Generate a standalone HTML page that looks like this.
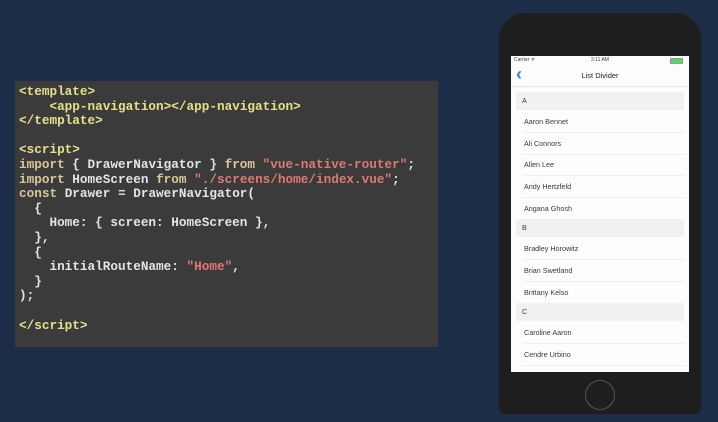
<!DOCTYPE html>
<html><head><style>
body{margin:0;width:718px;height:422px;background:#1c2d47;position:relative;overflow:hidden;font-family:"Liberation Sans",sans-serif}
#code{position:absolute;left:15px;top:81px;width:423px;height:266px;background:#3b3b3b}
pre{margin:0;position:absolute;left:19px;top:85px;font:bold 12.7px/14.6px "Liberation Mono",monospace;color:#e4e4e4}
.t{color:#e6e08a}.k{color:#d9c79a}.s{color:#dc7a72}
#phone{position:absolute;left:499px;top:13px;width:202px;height:401px;background:#1e1e1e;border-radius:26px 26px 6px 6px}
#scr{position:absolute;left:511px;top:56px;width:178px;height:316px;background:#fdfdfd;overflow:hidden;font-size:7.2px;color:#3a3a3a}
.hb{position:absolute;left:585px;top:380px;width:28px;height:28px;border:1.5px solid #555;border-radius:50%}
.sec{position:absolute;left:5px;width:168px;height:18px;background:#f1f1f1;line-height:18px;text-indent:6px}
.it{position:absolute;left:13px;width:160px;height:21px;line-height:21px;border-bottom:1px solid #eee}
</style></head><body>
<div id="code"></div>
<pre><span class="t">&lt;template&gt;
    &lt;app-navigation&gt;&lt;/app-navigation&gt;
&lt;/template&gt;

&lt;script&gt;</span>
<span class="k">import</span> { DrawerNavigator } <span class="k">from</span> <span class="s">"vue-native-router"</span>;
<span class="k">import</span> HomeScreen <span class="k">from</span> <span class="s">"./screens/home/index.vue"</span>;
<span class="k">const</span> Drawer = DrawerNavigator(
  {
    Home: { screen: HomeScreen },
  },
  {
    initialRouteName: <span class="s">"Home"</span>,
  }
);

<span class="t">&lt;/script&gt;</span></pre>
<div id="phone"></div>
<div id="scr">
<div style="position:absolute;left:3px;top:1px;font-size:5px">Carrier ᯤ</div>
<div style="position:absolute;left:80px;top:1px;font-size:5px">2:11 AM</div>
<div style="position:absolute;left:159px;top:2px;width:11px;height:4px;background:#4cd964;border:1px solid #999"></div>
<div style="position:absolute;left:5px;top:8px;color:#2d7cf6;font-size:18px;font-weight:bold">‹</div>
<div style="position:absolute;left:0;width:178px;top:15px;text-align:center;font-size:7.5px;color:#222">List Divider</div>
<div style="position:absolute;left:0;top:30px;width:178px;border-top:1px solid #e4e4e4"></div>
<div class="sec" style="top:36px">A</div>
<div class="it" style="top:55px">Aaron Bennet</div>
<div class="it" style="top:77px">Ali Connors</div>
<div class="it" style="top:98px">Allen Lee</div>
<div class="it" style="top:120px">Andy Hertzfeld</div>
<div class="it" style="top:142px;border:0">Angana Ghosh</div>
<div class="sec" style="top:163px">B</div>
<div class="it" style="top:182px">Bradley Horowitz</div>
<div class="it" style="top:204px">Brian Swetland</div>
<div class="it" style="top:226px;border:0">Brittany Kelso</div>
<div class="sec" style="top:247px">C</div>
<div class="it" style="top:266px">Caroline Aaron</div>
<div class="it" style="top:288px">Cendre Urbino</div>
</div>
<div class="hb"></div>
</body></html>
